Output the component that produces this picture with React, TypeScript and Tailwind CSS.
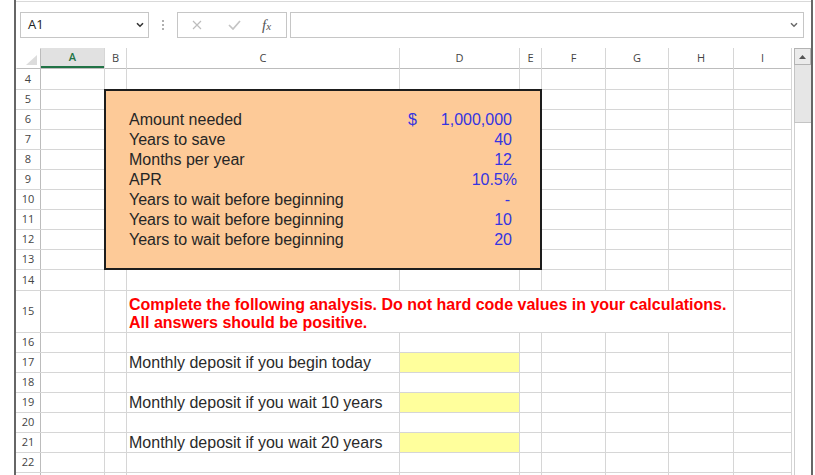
import React from "react";

const CELL = "font-['Liberation_Sans',Arial,sans-serif]";
const HDR = "font-['Open_Sans','Noto_Sans',sans-serif] text-[11px] text-[#444]";

function RowHdr({ n }: { n?: number }) {
  return (
    <div className={`bg-white flex items-center justify-center shadow-[1px_0_0_#bcbcbc] ${HDR}`}>
      {n}
    </div>
  );
}

function ColHdr({ l }: { l: string }) {
  if (l === "A") {
    return (
      <div className="bg-[#e1e1e1] border-b-2 border-[#217346] flex items-center justify-center shadow-[0_1px_0_#bcbcbc] font-['Open_Sans','Noto_Sans',sans-serif] text-[11px] font-semibold text-[#217346]">
        A
      </div>
    );
  }
  return (
    <div className={`bg-white flex items-center justify-center shadow-[0_1px_0_#bcbcbc] ${HDR}`}>{l}</div>
  );
}

function Blanks({ n }: { n: number }) {
  return (
    <>
      {Array.from({ length: n }).map((_, i) => (
        <div key={i} className="bg-white" />
      ))}
    </>
  );
}

function Deposit({ n, label }: { n: number; label: string }) {
  return (
    <>
      <RowHdr n={n} />
      <Blanks n={2} />
      <div className={`bg-white pl-[2px] flex items-center text-[16px] text-[#2a2a2a] ${CELL}`}>{label}</div>
      <div className="bg-[#ffff9c]" />
      <Blanks n={5} />
    </>
  );
}

function BoxRow({ label, children }: { label: string; children: React.ReactNode }) {
  return (
    <div className="flex justify-between h-[20px] leading-[20px]">
      <span className="text-[#262626]">{label}</span>
      <span className="w-[104px] flex justify-end text-[#3535e0]">{children}</span>
    </div>
  );
}

export default function App() {
  const cols = ["A", "B", "C", "D", "E", "F", "G", "H", "I"];
  return (
    <div className="w-[815px] h-[475px] bg-white flex overflow-hidden">
      <div className="w-[14px] shrink-0" />
      <div className="w-[2px] shrink-0 bg-[#666]" />
      <div className="w-[795px] shrink-0 flex flex-col">
        <div className="h-px mt-px bg-[#d9d9d9]" />
        {/* toolbar */}
        <div className="h-[26px] mt-[10px] flex shrink-0">
          <div className="ml-[4px] w-[129px] border border-[#c6c6c6] flex items-center justify-between pl-[7px] pr-[4px]">
            <span className="font-['Open_Sans','Noto_Sans',sans-serif] text-[13px] text-[#222]">A1</span>
            <svg width="8" height="6" viewBox="0 0 8 6">
              <path d="M1 1.2l3 3 3-3" stroke="#333" strokeWidth="1.6" fill="none" />
            </svg>
          </div>
          <div className="w-[28px] flex flex-col items-center justify-center gap-[2px]">
            <div className="w-[2px] h-[2px] bg-[#b0b0b0]" />
            <div className="w-[2px] h-[2px] bg-[#b0b0b0]" />
            <div className="w-[2px] h-[2px] bg-[#b0b0b0]" />
          </div>
          <div className="w-[110px] border border-[#c6c6c6] flex items-center pl-[14px]">
            <svg width="10" height="10" viewBox="0 0 10 10">
              <path d="M1 1L9 9M9 1L1 9" stroke="#bdbdbd" strokeWidth="1.2" />
            </svg>
            <svg className="ml-[26px]" width="13" height="10" viewBox="0 0 13 10">
              <path d="M1 5l4 4 7-8" stroke="#c4c4c4" strokeWidth="1.7" fill="none" />
            </svg>
            <span className="ml-[21px] font-['Liberation_Serif',serif] italic text-[#555] text-[15px] leading-none">
              f<span className="text-[11px]">x</span>
            </span>
          </div>
          <div className="ml-[3px] w-[514px] border border-[#c6c6c6] flex items-center justify-end pr-[5px]">
            <svg width="8" height="6" viewBox="0 0 8 6">
              <path d="M1 1.2l3 3 3-3" stroke="#6a6a6a" strokeWidth="1.5" fill="none" />
            </svg>
          </div>
        </div>
        {/* sheet */}
        <div className="mt-[10px] flex flex-1 min-h-0 overflow-hidden">
          <div className="w-[776px] shrink-0 grid grid-cols-[24px_63px_21px_272px_119px_21px_63px_62px_64px_57px] grid-rows-[20px_20px_repeat(9,19px)_20px_41px_repeat(8,19px)] gap-px pr-px bg-[#d6d6d6] self-start">
            {/* header */}
            <div className="bg-white flex items-end justify-end p-[3px] shadow-[1px_1px_0_#bcbcbc]">
              <svg width="11" height="10" viewBox="0 0 11 10">
                <path d="M11 0V10H0Z" fill="#dcdcdc" />
              </svg>
            </div>
            {cols.map((c) => (
              <ColHdr key={c} l={c} />
            ))}
            {/* row 4 */}
            <RowHdr n={4} />
            <Blanks n={9} />
            {/* box B5:E13 */}
            <div className={`col-start-3 col-span-4 row-start-3 row-span-9 -m-px border-2 border-[#1d1d1d] bg-[#fdca98] pt-[19px] pl-[23px] pr-[28px] text-[16px] ${CELL}`}>
              <BoxRow label="Amount needed">
                <span className="w-full flex justify-between">
                  <span>$</span>
                  <span>1,000,000</span>
                </span>
              </BoxRow>
              <BoxRow label="Years to save">40</BoxRow>
              <BoxRow label="Months per year">12</BoxRow>
              <BoxRow label="APR">
                <span className="-mr-[5px]">10.5%</span>
              </BoxRow>
              <BoxRow label="Years to wait before beginning">
                <span className="mr-[2px]">-</span>
              </BoxRow>
              <BoxRow label="Years to wait before beginning">10</BoxRow>
              <BoxRow label="Years to wait before beginning">20</BoxRow>
            </div>
            {[5, 6, 7, 8, 9, 10, 11, 12, 13].map((n) => (
              <React.Fragment key={n}>
                <RowHdr n={n} />
                <Blanks n={5} />
              </React.Fragment>
            ))}
            {/* row 14 */}
            <RowHdr n={14} />
            <Blanks n={9} />
            {/* row 15 */}
            <RowHdr n={15} />
            <Blanks n={2} />
            <div className={`col-span-6 bg-white pl-[2px] pt-[5px] flex flex-col text-[16px] leading-[18px] font-bold text-[#ff0000] ${CELL}`}>
              <span>Complete the following analysis. Do not hard code values in your calculations.</span>
              <span>All answers should be positive.</span>
            </div>
            <Blanks n={1} />
            {/* rows 16-23 */}
            <RowHdr n={16} />
            <Blanks n={9} />
            <Deposit n={17} label="Monthly deposit if you begin today" />
            <RowHdr n={18} />
            <Blanks n={9} />
            <Deposit n={19} label="Monthly deposit if you wait 10 years" />
            <RowHdr n={20} />
            <Blanks n={9} />
            <Deposit n={21} label="Monthly deposit if you wait 20 years" />
            <RowHdr n={22} />
            <Blanks n={9} />
            <RowHdr />
            <Blanks n={9} />
          </div>
          <div className="w-[2px] shrink-0" />
          {/* scrollbar */}
          <div className="w-[17px] shrink-0 flex flex-col">
            <div className="h-[17px] border border-[#b3b3b3] bg-[#ebebeb] flex items-center justify-center">
              <svg width="7" height="4" viewBox="0 0 7 4">
                <path d="M0 4L3.5 0L7 4Z" fill="#555" />
              </svg>
            </div>
            <div className="h-[58px] bg-[#e6e6e6] border-l border-b border-[#c4c4c4]" />
            <div className="flex-1 border-l border-[#cfcfcf] bg-white" />
          </div>
        </div>
      </div>
      <div className="w-[2px] shrink-0 bg-[#666]" />
      <div className="w-[2px] shrink-0" />
    </div>
  );
}
